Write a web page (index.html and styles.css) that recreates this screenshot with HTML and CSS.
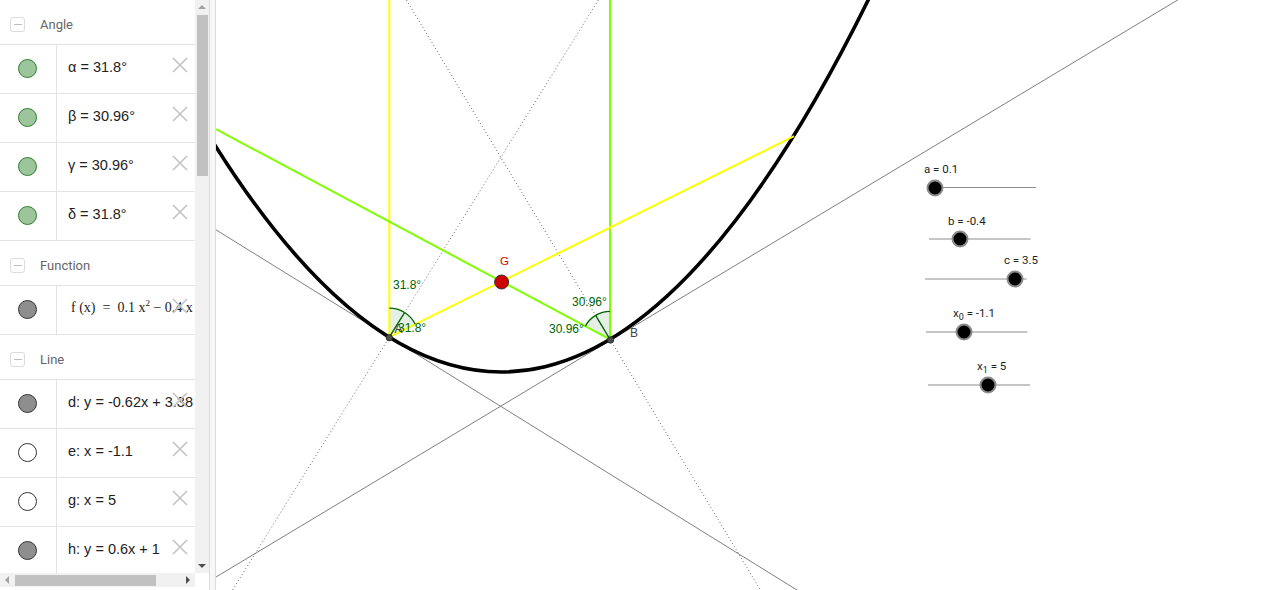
FILE: index.html
```html
<!DOCTYPE html>
<html>
<head>
<meta charset="utf-8">
<link rel="stylesheet" href="styles.css">
</head>
<body>
<div class="app">
  <aside class="panel">
    <div class="panel-main">
      <div class="list">
        <div class="group-head"><span class="toggle"></span><span class="gname">Angle</span></div>
        <div class="item"><div class="marble-cell"><span class="marble angle"></span></div><div class="expr">α = 31.8°</div><svg class="del" viewBox="0 0 16 16"><path d="M1 1L15 15M15 1L1 15"/></svg></div>
        <div class="item"><div class="marble-cell"><span class="marble angle"></span></div><div class="expr">β = 30.96°</div><svg class="del" viewBox="0 0 16 16"><path d="M1 1L15 15M15 1L1 15"/></svg></div>
        <div class="item"><div class="marble-cell"><span class="marble angle"></span></div><div class="expr">γ = 30.96°</div><svg class="del" viewBox="0 0 16 16"><path d="M1 1L15 15M15 1L1 15"/></svg></div>
        <div class="item"><div class="marble-cell"><span class="marble angle"></span></div><div class="expr">δ = 31.8°</div><svg class="del" viewBox="0 0 16 16"><path d="M1 1L15 15M15 1L1 15"/></svg></div>
        <div class="group-head"><span class="toggle"></span><span class="gname">Function</span></div>
        <div class="item"><div class="marble-cell"><span class="marble shown"></span></div><div class="expr serif">f (x) &nbsp;=&nbsp; 0.1 x<sup>2</sup> − 0.4 x + 3.5</div><svg class="del" viewBox="0 0 16 16"><path d="M1 1L15 15M15 1L1 15"/></svg></div>
        <div class="group-head"><span class="toggle"></span><span class="gname">Line</span></div>
        <div class="item"><div class="marble-cell"><span class="marble shown"></span></div><div class="expr">d: y = -0.62x + 3.38</div><svg class="del" viewBox="0 0 16 16"><path d="M1 1L15 15M15 1L1 15"/></svg></div>
        <div class="item"><div class="marble-cell"><span class="marble hidden"></span></div><div class="expr">e: x = -1.1</div><svg class="del" viewBox="0 0 16 16"><path d="M1 1L15 15M15 1L1 15"/></svg></div>
        <div class="item"><div class="marble-cell"><span class="marble hidden"></span></div><div class="expr">g: x = 5</div><svg class="del" viewBox="0 0 16 16"><path d="M1 1L15 15M15 1L1 15"/></svg></div>
        <div class="item"><div class="marble-cell"><span class="marble shown"></span></div><div class="expr">h: y = 0.6x + 1</div><svg class="del" viewBox="0 0 16 16"><path d="M1 1L15 15M15 1L1 15"/></svg></div>
      </div>
      <div class="vscroll">
        <div class="arrow-box"><span class="tri up"></span></div>
        <div class="vthumb"></div>
        <div class="arrow-box bottom"><span class="tri down"></span></div>
      </div>
    </div>
    <div class="hscroll">
      <div class="htrack">
        <div class="arrow-box"><span class="tri left"></span></div>
        <div class="hthumb"></div>
        <div class="arrow-box end"><span class="tri right"></span></div>
      </div>
      <div class="corner"></div>
    </div>
  </aside>
  <div class="divider"></div>
  <main class="canvas">
    <svg class="plot" width="1064" height="590" viewBox="216 0 1064 590">
      <path class="sector" d="M389.3,337.2 L389.3,308.2 A29,29 0 0 1 404.6,312.55 Z"/>
      <path class="sector" d="M389.3,337.2 L404.6,312.55 A29,29 0 0 1 415.3,324.3 Z"/>
      <path class="sector" d="M610,339.4 L610,311.4 A28,28 0 0 0 595.6,315.4 Z"/>
      <path class="sector" d="M610,339.4 L595.6,315.4 A28,28 0 0 0 585.3,326.2 Z"/>
      <line class="tangent" x1="216" y1="229.8" x2="820" y2="604.3"/>
      <line class="tangent" x1="216" y1="577" x2="1200" y2="-13.4"/>
      <line class="normal" x1="598.4" y1="0" x2="232.6" y2="590"/>
      <line class="normal" x1="406.4" y1="0" x2="760.4" y2="590"/>
      <path class="curve" d="M200,120.9 Q545,695.7 890,-45.5"/>
      <line class="yellow" x1="389.3" y1="0" x2="389.3" y2="337.2"/>
      <line class="green" x1="610" y1="0" x2="610" y2="339.4"/>
      <line class="yellow" x1="389.3" y1="337.2" x2="794" y2="136.2"/>
      <line class="green" x1="610" y1="339.4" x2="216" y2="129.2"/>
      <path class="arc" d="M389.3,308.2 A29,29 0 0 1 415.3,324.3"/>
      <line class="arc" x1="389.3" y1="337.2" x2="404.6" y2="312.55"/>
      <path class="arc" d="M610,311.4 A28,28 0 0 0 585.3,326.2"/>
      <line class="arc" x1="610" y1="339.4" x2="595.6" y2="315.4"/>
      <text class="alabel" x="393" y="289">31.8°</text>
      <text class="plabel" x="394.5" y="333">A</text>
      <text class="alabel" x="398" y="331.5">31.8°</text>
      <text class="alabel" x="572" y="306">30.96°</text>
      <text class="alabel" x="549" y="332.5">30.96°</text>
      <text class="plabel" x="630" y="336.5">B</text>
      <circle class="pt" cx="389.3" cy="337.7" r="3.2"/>
      <circle class="pt" cx="610.5" cy="340" r="3.2"/>
      <circle class="gpt" cx="501.6" cy="282" r="7"/>
      <text class="glabel" x="500" y="265">G</text>
      <g class="slider">
        <text x="924" y="173">a = 0.1</text>
        <line x1="935" y1="187.5" x2="1036" y2="187.5"/>
        <circle cx="935" cy="188" r="7.5"/>
      </g>
      <g class="slider">
        <text x="948" y="225">b = -0.4</text>
        <line x1="929" y1="239" x2="1030.5" y2="239"/>
        <circle cx="960" cy="239" r="7.5"/>
      </g>
      <g class="slider">
        <text x="1004" y="264">c = 3.5</text>
        <line x1="925" y1="279" x2="1026.5" y2="279"/>
        <circle cx="1015" cy="279" r="7.5"/>
      </g>
      <g class="slider">
        <text x="953" y="317">x<tspan class="sub" dy="3">0</tspan><tspan dy="-3"> = -1.1</tspan></text>
        <line x1="926" y1="332" x2="1027.5" y2="332"/>
        <circle cx="964" cy="332" r="7.5"/>
      </g>
      <g class="slider">
        <text x="977" y="370">x<tspan class="sub" dy="3">1</tspan><tspan dy="-3"> = 5</tspan></text>
        <line x1="928" y1="385" x2="1030" y2="385"/>
        <circle cx="988" cy="385" r="7.5"/>
      </g>
    </svg>
  </main>
</div>
</body>
</html>
```
FILE: styles.css
```css
* { box-sizing: border-box; }
html, body {
  margin: 0;
  padding: 0;
  width: 1280px;
  height: 590px;
  overflow: hidden;
  background: #fff;
  font-family: "Liberation Sans", Arial, sans-serif;
}
.app {
  display: flex;
  width: 1280px;
  height: 590px;
}
.panel {
  width: 209px;
  flex: none;
  display: flex;
  flex-direction: column;
}
.panel-main {
  display: flex;
  height: 573px;
}
.list {
  width: 195px;
  height: 573px;
  overflow: hidden;
}
.group-head {
  height: 45px;
  border-bottom: 1px solid #e3e3e3;
  display: flex;
  align-items: center;
  padding: 5px 0 0 10px;
}
.toggle {
  width: 15px;
  height: 15px;
  border: 1px solid #dcdcdc;
  border-radius: 3px;
  display: flex;
  align-items: center;
  justify-content: center;
}
.toggle::after {
  content: "";
  width: 8px;
  height: 1.5px;
  background: #bdbdbd;
}
.gname {
  margin-left: 15px;
  font-family: Roboto, "Liberation Sans", sans-serif;
  font-size: 13px;
  color: #666;
}
.item {
  position: relative;
  height: 49px;
  border-bottom: 1px solid #e3e3e3;
  display: flex;
  align-items: center;
}
.marble-cell {
  width: 57px;
  height: 100%;
  flex: none;
  border-right: 1px solid #e3e3e3;
  display: flex;
  align-items: center;
  justify-content: center;
  padding-right: 1px;
}
.marble {
  width: 19px;
  height: 19px;
  border-radius: 50%;
  border: 1px solid #333;
  margin-top: -2px;
}
.marble.angle {
  background: #9cc59c;
  border-color: #2f7d2f;
}
.marble.shown {
  background: #8e8e8e;
  border-color: #333;
}
.marble.hidden {
  background: #fff;
  border-color: #333;
}
.expr {
  padding-left: 11px;
  white-space: nowrap;
  font-size: 14.5px;
  color: #222;
  padding-bottom: 4px;
}
.expr.serif {
  font-family: "Liberation Serif", "Times New Roman", serif;
  font-size: 14px;
  padding-left: 14px;
}
.expr sup {
  font-size: 9px;
  vertical-align: 6px;
  line-height: 0;
}
.del {
  position: absolute;
  left: 172px;
  top: 12px;
  width: 16px;
  height: 16px;
  fill: none;
  stroke: #c3c3c3;
  stroke-width: 1.6;
}
.vscroll {
  width: 14px;
  height: 573px;
  background: #f1f1f1;
  display: flex;
  flex-direction: column;
  align-items: center;
}
.arrow-box {
  width: 14px;
  height: 14px;
  flex: none;
  display: flex;
  align-items: center;
  justify-content: center;
}
.arrow-box.bottom { margin-top: auto; }
.arrow-box.end { margin-left: auto; }
.tri {
  width: 0;
  height: 0;
  border-style: solid;
}
.tri.up {
  border-width: 0 4px 4px 4px;
  border-color: transparent transparent #a3a3a3 transparent;
}
.tri.down {
  border-width: 4px 4px 0 4px;
  border-color: #505050 transparent transparent transparent;
}
.tri.left {
  border-width: 4px 4px 4px 0;
  border-color: transparent #a3a3a3 transparent transparent;
}
.tri.right {
  border-width: 4px 0 4px 4px;
  border-color: transparent transparent transparent #505050;
}
.vthumb {
  width: 11px;
  height: 161px;
  margin-top: 1px;
  background: #c1c1c1;
}
.hscroll {
  display: flex;
  height: 14px;
}
.htrack {
  width: 195px;
  height: 14px;
  background: #f1f1f1;
  display: flex;
  align-items: center;
}
.hthumb {
  width: 141px;
  height: 11px;
  margin-left: 1px;
  background: #c1c1c1;
}
.corner {
  width: 14px;
  height: 14px;
  background: #fff;
}
.divider {
  width: 7px;
  height: 590px;
  flex: none;
  background: #f8f8f8;
  border-left: 1px solid #dcdcdc;
  border-right: 1px solid #dcdcdc;
}
.canvas {
  flex: 1;
  height: 590px;
  overflow: hidden;
  background: #fff;
}
.plot {
  display: block;
}
.sector {
  fill: rgba(0, 100, 0, 0.1);
  stroke: none;
}
.arc {
  fill: none;
  stroke: #006400;
  stroke-width: 1.3;
}
.tangent {
  stroke: #808080;
  stroke-width: 1;
}
.normal {
  stroke: #6a6a6a;
  stroke-width: 1;
  stroke-dasharray: 1 2.5;
}
.curve {
  fill: none;
  stroke: #000;
  stroke-width: 3.6;
}
.yellow {
  stroke: #ffff00;
  stroke-width: 2;
}
.green {
  stroke: #7fff00;
  stroke-width: 2;
}
.alabel {
  font-family: "Liberation Sans", Arial, sans-serif;
  font-size: 12px;
  fill: #006400;
}
.plabel {
  font-family: "Liberation Sans", Arial, sans-serif;
  font-size: 12px;
  fill: #444;
}
.glabel {
  font-family: "Liberation Sans", Arial, sans-serif;
  font-size: 11.5px;
  fill: #dd0000;
}
.pt {
  fill: #4d4d4d;
  stroke: #222;
  stroke-width: 0.8;
}
.gpt {
  fill: #cc0000;
  stroke: #333;
  stroke-width: 1;
}
.slider text {
  font-family: Roboto, "Liberation Sans", sans-serif;
  font-size: 11.5px;
  fill: #222;
}
.slider .sub {
  font-size: 9px;
}
.slider line {
  stroke: #8c8c8c;
  stroke-width: 1;
}
.slider circle {
  fill: #000;
  stroke: #8c8c8c;
  stroke-width: 2;
}
```
